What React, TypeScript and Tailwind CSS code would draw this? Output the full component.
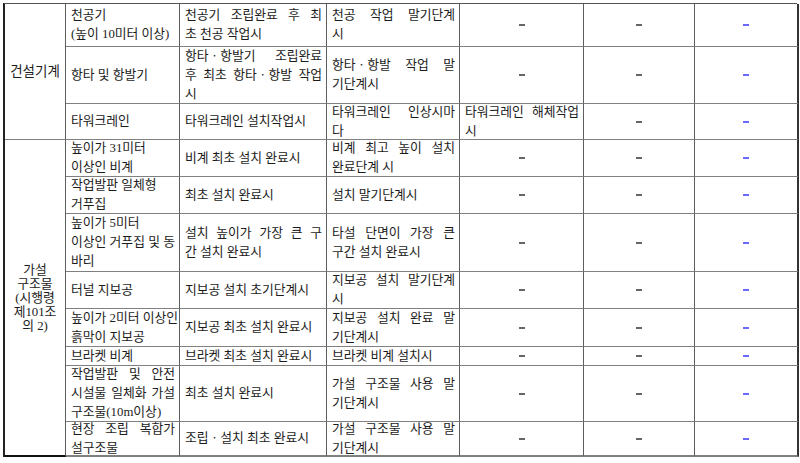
import type { ReactNode } from "react";

type Line = string | { t: string; j: true };

const font = { fontFamily: '"Liberation Serif", "Noto Sans CJK KR", serif' };

function Text({ lines }: { lines: Line[] }) {
  return (
    <>
      {lines.map((l, i) =>
        typeof l === "string" ? (
          <span key={i} className="block whitespace-nowrap">
            {l}
          </span>
        ) : (
          <span key={i} className="block whitespace-nowrap text-justify [text-align-last:justify]">
            {l.t}
          </span>
        ),
      )}
    </>
  );
}

function Cell({ children, last }: { children: ReactNode; last?: boolean }) {
  return (
    <div
      className={
        "flex flex-col justify-center overflow-visible border-b border-r border-b-[#808080] border-r-[#5e5e5e] pl-[5px] pr-[4px] " +
        (last ? "border-b-2 border-b-[#111]" : "")
      }
    >
      {children}
    </div>
  );
}

function Dash({ blue, last, edge }: { blue?: boolean; last?: boolean; edge?: boolean }) {
  return (
    <div
      className={
        "flex items-center justify-center border-b border-r border-b-[#808080] " +
        (edge ? "border-r-2 border-r-[#333] " : "border-r-[#5e5e5e] ") +
        (last ? "border-b-2 border-b-[#111]" : "")
      }
    >
      <span className={"h-[2px] w-[6px] " + (blue ? "bg-[#6a6aff]" : "bg-[#666]")} />
    </div>
  );
}

const j = (t: string): Line => ({ t, j: true });

type Row = { a: Line[]; b: Line[]; c: Line[]; d?: Line[] };

const rows: Row[] = [
  { a: ["천공기", "(높이 10미터 이상)"], b: [j("천공기 조립완료 후 최"), "초 천공 작업시"], c: [j("천공 작업 말기단계"), "시"] },
  {
    a: ["항타 및 항발기"],
    b: [j("항타ㆍ항발기 조립완료"), j("후 최초 항타ㆍ항발 작업"), "시"],
    c: [j("항타ㆍ항발 작업 말"), "기단계시"],
  },
  { a: ["타워크레인"], b: ["타워크레인 설치작업시"], c: [j("타워크레인 인상시마"), "다"], d: [j("타워크레인 해체작업"), "시"] },
  { a: ["높이가 31미터", "이상인 비계"], b: ["비계 최초 설치 완료시"], c: [j("비계 최고 높이 설치"), "완료단계 시"] },
  { a: ["작업발판 일체형", "거푸집"], b: ["최초 설치 완료시"], c: ["설치 말기단계시"] },
  {
    a: ["높이가 5미터", j("이상인 거푸집 및 동"), "바리"],
    b: [j("설치 높이가 가장 큰 구"), "간 설치 완료시"],
    c: [j("타설 단면이 가장 큰"), "구간 설치 완료시"],
  },
  { a: ["터널 지보공"], b: ["지보공 설치 초기단계시"], c: [j("지보공 설치 말기단계"), "시"] },
  { a: ["높이가 2미터 이상인", "흙막이 지보공"], b: ["지보공 최초 설치 완료시"], c: [j("지보공 설치 완료 말"), "기단계시"] },
  { a: ["브라켓 비계"], b: ["브라켓 최초 설치 완료시"], c: ["브라켓 비계 설치시"] },
  {
    a: [j("작업발판 및 안전"), j("시설물 일체화 가설"), "구조물(10m이상)"],
    b: ["최초 설치 완료시"],
    c: [j("가설 구조물 사용 말"), "기단계시"],
  },
  { a: [j("현장 조립 복합가"), "설구조물"], b: ["조립ㆍ설치 최초 완료시"], c: [j("가설 구조물 사용 말"), "기단계시"] },
];

export default function App() {
  return (
    <div className="h-[463px] w-[800px] overflow-hidden bg-white text-[12.8px] leading-[19px] text-[#1c1c1c]" style={font}>
      <div className="pl-[3px] pt-[3px]">
        <div className="grid w-[794px] grid-cols-[61px_114px_147px_133px_124px_111px_104px] grid-rows-[43px_57px_36px_37px_37px_58px_37px_38px_19px_56px_35px] border-l-2 border-t border-l-[#222] border-t-[#555]">
          {rows.map((r, i) => {
            const last = i === rows.length - 1;
            return [
              i === 0 ? (
                <div key="g1" className="row-span-3 flex items-center justify-center border-b border-r border-b-[#808080] border-r-[#5e5e5e] text-[13.5px]">
                  건설기계
                </div>
              ) : null,
              i === 3 ? (
                <div
                  key="g2"
                  className="row-span-8 flex flex-col items-center justify-center border-b-2 border-r border-b-[#111] border-r-[#5e5e5e] text-center text-[12.8px] leading-[14px]"
                >
                  <span>가설</span>
                  <span>구조물</span>
                  <span>(시행령</span>
                  <span>제101조</span>
                  <span>의 2)</span>
                </div>
              ) : null,
              <Cell key={`a${i}`} last={last}>
                <Text lines={r.a} />
              </Cell>,
              <Cell key={`b${i}`} last={last}>
                <Text lines={r.b} />
              </Cell>,
              <Cell key={`c${i}`} last={last}>
                <Text lines={r.c} />
              </Cell>,
              r.d ? (
                <Cell key={`d${i}`} last={last}>
                  <Text lines={r.d} />
                </Cell>
              ) : (
                <Dash key={`d${i}`} last={last} />
              ),
              <Dash key={`e${i}`} last={last} />,
              <Dash key={`f${i}`} last={last} blue edge />,
            ];
          })}
        </div>
        <p className="mt-[4px] pl-[28px] tracking-[6px]">주) 위 표의 확인 시기는 공사 진행 상황에 따라 조정할 수 있다.</p>
      </div>
    </div>
  );
}
